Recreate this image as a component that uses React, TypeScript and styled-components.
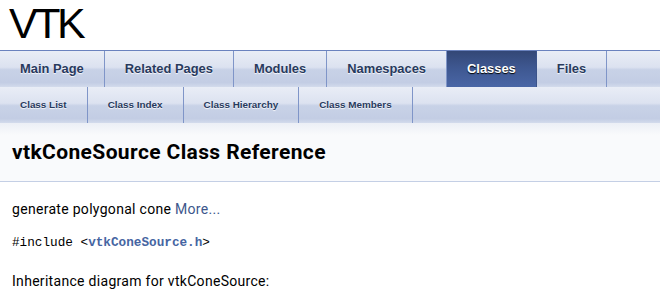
import styled, { createGlobalStyle } from "styled-components";

const GlobalStyle = createGlobalStyle`
  html, body {
    margin: 0;
    padding: 0;
    background: #fff;
  }
  body {
    font: 400 14px/22px Roboto, sans-serif;
    color: #000;
  }
`;

const mainTabs = ["Main Page", "Related Pages", "Modules", "Namespaces", "Classes", "Files"];
const subTabs = ["Class List", "Class Index", "Class Hierarchy", "Class Members"];

export default function App() {
  return (
    <Page>
      <GlobalStyle />
      <TitleArea>VTK</TitleArea>
      <TabBar $top>
        {mainTabs.map((t) => (
          <Tab key={t} $active={t === "Classes"}>
            {t}
          </Tab>
        ))}
      </TabBar>
      <TabBar>
        {subTabs.map((t) => (
          <Tab key={t} $small>
            {t}
          </Tab>
        ))}
      </TabBar>
      <Header>
        <Title>vtkConeSource Class Reference</Title>
      </Header>
      <Contents>
        <Para $gap={12}>
          generate polygonal cone <Link href="#">More...</Link>
        </Para>
        <Include>
          #include &lt;<CodeLink>vtkConeSource.h</CodeLink>&gt;
        </Include>
        <Para $gap={0}>Inheritance diagram for vtkConeSource:</Para>
      </Contents>
    </Page>
  );
}

const Page = styled.div`
  width: 660px;
  height: 293px;
  overflow: hidden;
`;

const TitleArea = styled.div`
  height: 50px;
  padding-left: 9px;
  box-sizing: border-box;
  font: 400 43px/46px "Liberation Sans", Arial, sans-serif;
  letter-spacing: -3.5px;
  color: #000;
`;

const TabBar = styled.ul<{ $top?: boolean }>`
  display: flex;
  margin: 0;
  padding: 0;
  list-style: none;
  height: 36px;
  border-top: ${(p) => (p.$top ? "1px solid #6a82be" : "none")};
  background: linear-gradient(
    to bottom,
    #e9edf6 0%,
    #dce2f0 45%,
    #c8d2e7 52%,
    #c3cde4 88%,
    #d3dbec 100%
  );
`;

const Tab = styled.li<{ $active?: boolean; $small?: boolean }>`
  padding: 0 20px;
  line-height: 36px;
  height: 36px;
  box-sizing: border-box;
  border-right: 1px solid ${(p) => (p.$active ? "#3b538a" : "#7f95c8")};
  font-family: "Liberation Sans", Arial, sans-serif;
  font-weight: bold;
  font-size: ${(p) => (p.$small ? "9.9px" : "12.9px")};
  white-space: nowrap;
  color: ${(p) => (p.$active ? "#fff" : "#283a5d")};
  text-shadow: ${(p) =>
    p.$active ? "0 1px 1px rgba(0,0,0,1)" : "0 1px 1px rgba(255,255,255,0.9)"};
  background: ${(p) =>
    p.$active
      ? "linear-gradient(to bottom, #334776 0%, #3e5790 45%, #4966a6 100%)"
      : "transparent"};
`;

const Header = styled.div`
  background: linear-gradient(to bottom, #eceff6 0px, #f9fafc 12px) #f9fafc;
  border-bottom: 1px solid #c4cfe5;
  padding: 5px 5px 5px 10px;
`;

const Title = styled.div`
  margin: 10px 2px;
  font: bold 21px/28px Roboto, sans-serif;
  letter-spacing: 0.38px;
  color: #000;
`;

const Contents = styled.div`
  padding: 16px 12px 0 12px;
`;

const Para = styled.p<{ $gap: number }>`
  margin: 0 0 ${(p) => p.$gap}px;
  line-height: 22px;
  letter-spacing: 0.3px;
`;

const Link = styled.a`
  color: #3d578c;
  text-decoration: none;
`;

const Include = styled.p`
  margin: 0 0 16px;
  line-height: 22px;
  font-family: "Liberation Mono", monospace;
  font-size: 12.7px;
`;

const CodeLink = styled.a`
  color: #4665a2;
  font-weight: bold;
  text-decoration: none;
`;
